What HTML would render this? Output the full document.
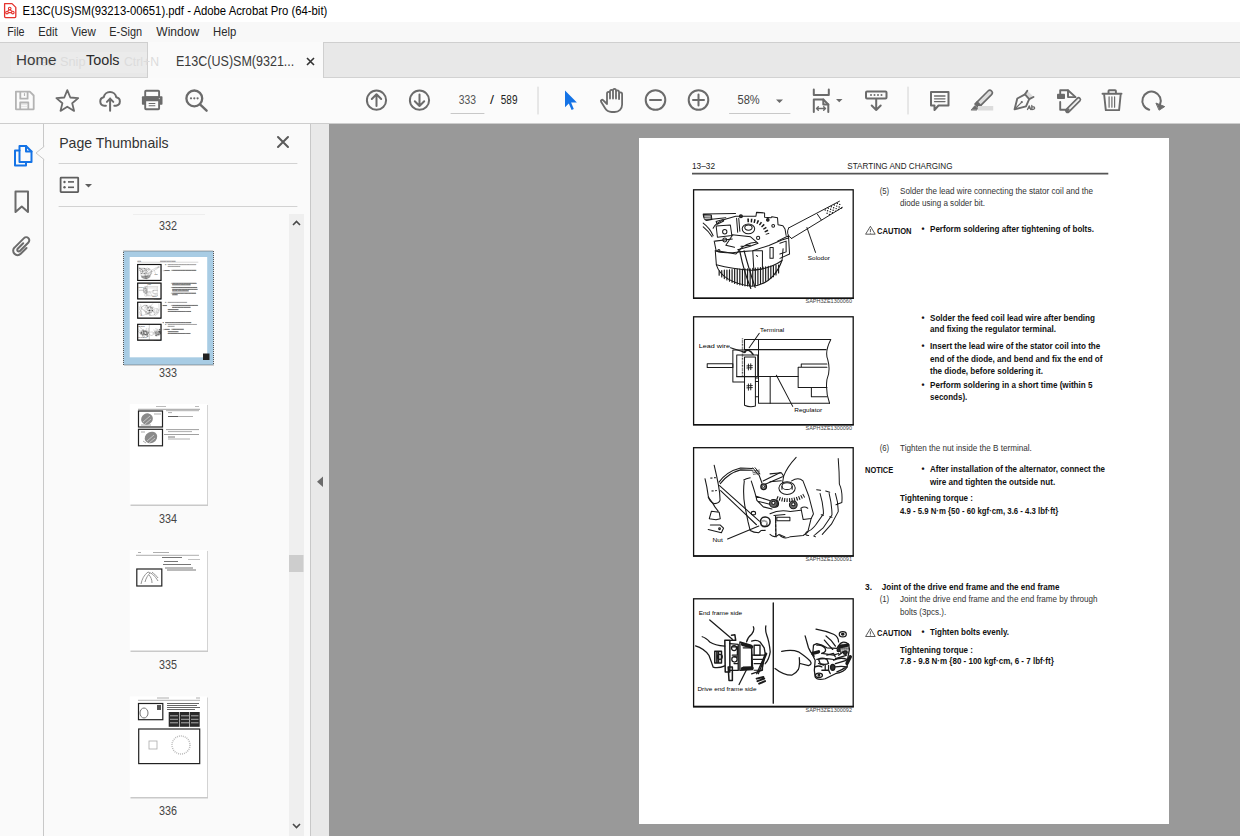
<!DOCTYPE html>
<html><head><meta charset="utf-8">
<style>
*{margin:0;padding:0;box-sizing:border-box}
html,body{width:1240px;height:836px;overflow:hidden;background:#999;font-family:"Liberation Sans",sans-serif;color:#222}
.abs{position:absolute}
#title{left:0;top:0;width:1240px;height:22px;background:#fff}
#title .t{left:22px;top:3px;font-size:13px;color:#000;white-space:nowrap}
#menu{left:0;top:22px;width:1240px;height:20px;background:#f8f8f8}
#menu span{position:absolute;top:2px;font-size:12.5px;color:#1a1a1a}
#tabs{left:0;top:42px;width:1240px;height:36px;background:#e8e8e8;border-top:1px solid #cfcfcf}
#tb{left:0;top:78px;width:1240px;height:46px;background:#fbfbfb;border-bottom:1px solid #cdcdcd}
#strip{left:0;top:124px;width:44px;height:712px;background:#fafafa;border-right:1px solid #c8c8c8}
#panel{left:44px;top:124px;width:267px;height:712px;background:#fafafa;border-right:1px solid #c8c8c8}
#coll{left:311px;top:124px;width:18px;height:712px;background:#e9e9e9}
#page{left:639px;top:138px;width:530px;height:686px;background:#fff}
svg{position:absolute;overflow:visible}
</style></head><body>
<div id="title" class="abs">
  <svg style="left:0;top:0" width="22" height="22" viewBox="0 0 22 22"><path d="M4.6 3.6h7.4l3.8 3.8v9.2c0 .6-.4 1-1 1H5.6c-.6 0-1-.4-1-1z" fill="#fff" stroke="#e5322d" stroke-width="1.3" stroke-linejoin="round"/><g fill="none" stroke="#e5322d" stroke-width="1.1"><circle cx="9.7" cy="8.6" r="1.3"/><circle cx="7" cy="12.6" r="1.3"/><circle cx="12.8" cy="12.6" r="1.3"/><path d="M9.2 9.8L7.5 11.4M10.2 9.8l1.9 1.6M8.3 12.6h3.2"/></g></svg>
</div>
<div id="menu" class="abs">
</div>
<div id="tabs" class="abs">
  <div class="abs" style="left:0;top:34px;width:1240px;height:1px;background:#d2d2d2"></div>
  <div class="abs" style="left:11px;top:9px;width:167px;height:21px;background:#ebebeb"></div>
  <div class="abs" style="left:147px;top:-1px;width:177px;height:37px;background:#fafafa;border-left:1px solid #cfcfcf;border-right:1px solid #cfcfcf"></div>
  <svg style="left:306px;top:14px" width="9" height="9" viewBox="0 0 9 9"><path d="M1 1l7 7M8 1l-7 7" stroke="#333" stroke-width="1.6"/></svg>
</div>
<div id="tb" class="abs"></div>
<svg style="left:0;top:0" width="1240" height="124" viewBox="0 0 1240 124">
<g fill="none" stroke="#6b6b6b" stroke-width="2" stroke-linejoin="round" stroke-linecap="round">
  <!-- save -->
  <g stroke="#b3b3b3" stroke-width="1.8"><path d="M15.9 91.6h13.9l3.9 3.9v13.4c0 .3-.2.5-.5.5H16.4c-.3 0-.5-.2-.5-.5z"/><path d="M20.3 91.8v6.9h7.3v-6.9"/><path d="M20.2 109v-6.5h8.1v6.5"/><path d="M24.5 93.7v1.8" stroke-width="1.2"/><path d="M21.5 104.6h5.5M21.5 106.6h5.5" stroke-width="0.8" stroke="#ddd"/></g>
  <!-- star -->
  <path d="M67.3 90.2l3 7.3 7.9.6-6 5.1 1.9 7.7-6.8-4.2-6.8 4.2 1.9-7.7-6-5.1 7.9-.6z" stroke-width="1.8"/>
  <!-- cloud -->
  <path d="M105.9 105.7h-1.6a4.3 4.3 0 0 1-.6-8.5 6.4 6.4 0 0 1 12.6 0 4.3 4.3 0 0 1-.2 8.5h-1.8" stroke-width="2"/><path d="M110.1 110.8v-12.3M106.9 101.9l3.2-3.3 3.2 3.3" stroke-width="2"/>
  <!-- print -->
  <rect x="145.2" y="90.8" width="13.9" height="6.5" rx="0.8" stroke-width="1.9"/>
  <path d="M142.9 96.2h18.6c.6 0 1 .4 1 1v6.6c0 .6-.4 1-1 1h-18.6c-.6 0-1-.4-1-1v-6.6c0-.6.4-1 1-1z" fill="#6b6b6b" stroke="none"/>
  <rect x="145.2" y="100.4" width="13.9" height="8.8" rx="0.8" fill="#fafafa" stroke-width="1.9"/><path d="M149.1 103.5h5.8M149.1 105.8h5.8" stroke-width="1.1"/>
  <circle cx="159.4" cy="98.6" r="0.7" fill="#ccc" stroke="none"/>
  <!-- search -->
  <circle cx="194.3" cy="98.4" r="7.9" stroke-width="2.3"/><path d="M200 104.3l6.6 6.4" stroke-width="2.4"/><g fill="#6b6b6b" stroke="none"><circle cx="191" cy="98.3" r="1.1"/><circle cx="194.3" cy="98.3" r="1.1"/><circle cx="197.6" cy="98.3" r="1.1"/></g>
  <!-- up/down -->
  <circle cx="376.5" cy="100.2" r="9.6"/><path d="M376.5 106v-11.5M371.8 99l4.7-4.7 4.7 4.7"/>
  <circle cx="419.5" cy="100.2" r="9.6"/><path d="M419.5 94.5v11.5M414.8 101.3l4.7 4.7 4.7-4.7"/>
  <!-- zoom -->
  <circle cx="655.5" cy="100" r="9.8"/><path d="M650 100h11"/>
  <circle cx="698.5" cy="100" r="9.8"/><path d="M693 100h11M698.5 94.5v11"/>
  <!-- hand -->
  <path d="M606.5 103.5l-3.2-3.2c-1.2-1.2-3-.1-2.2 1.5l4 6.5c1.5 2.5 3.5 3.7 6.5 3.7h3c4.5 0 7.5-3.2 7.5-7.5v-10.5c0-2.2-3-2.2-3 0v5M616 98.5v-8c0-2.2-3-2.2-3 0v8M613 98v-6.5c0-2.2-3-2.2-3 0v7M610 98.5v-5c0-2.2-3-2.2-3 0v10.5M619 99v-7c0-2.2-3-2.2-3 0v6.5" stroke-width="1.8"/>
  <!-- fit page -->
  <path d="M813.8 89.5v5.5h15v-5.5"/><path d="M813.8 112v-12.5h9.5l5 5v7.5"/><path d="M823.3 99.5v5h5"/><path d="M816.5 108.5h9M818.3 106.7l-1.8 1.8 1.8 1.8M823.7 106.7l1.8 1.8-1.8 1.8" stroke-width="1.4"/>
  <!-- scroll -->
  <rect x="866" y="91.5" width="20.5" height="7" rx="1"/><g fill="#6b6b6b" stroke="none"><circle cx="871" cy="95" r="1"/><circle cx="874.5" cy="95" r="1"/><circle cx="878" cy="95" r="1"/><circle cx="881.5" cy="95" r="1"/></g><path d="M876.2 99v11M871.7 105.5l4.5 4.5 4.5-4.5"/>
  <!-- comment -->
  <path d="M931 92h17.5v13.5h-10l-4 4.5v-4.5h-3.5z"/><path d="M934.5 96h10.5M934.5 98.8h10.5M934.5 101.6h10.5" stroke-width="1.3"/>
  <!-- highlight -->
  <path d="M989.8 92.8L978.8 103.8" stroke-width="6.6" stroke-linecap="round"/><path d="M989.8 92.8L979.2 103.4" stroke="#dcdcdc" stroke-width="3.4" stroke-linecap="round"/>
  <path d="M979.5 103.1L976.3 106.3" stroke-width="6.6" stroke-linecap="butt"/>
  <path d="M971.3 109.8L974.9 105.6 977.5 108.2 976.9 109.8z" fill="#6b6b6b" stroke-width="0.8"/>
  <rect x="978" y="106" width="15.2" height="4.5" fill="#dcdcdc" stroke="none"/>
  <!-- sign -->
  <path d="M1025 94.3L1027.3 90.5 1033.7 96.9 1029.2 99.2z" fill="#dcdcdc" stroke="none"/>
  <path d="M1025 94.3L1027.3 90.8M1029.2 99.2L1033.5 97" stroke-width="1.9"/>
  <path d="M1025 94.3L1017.3 98.5 1014.6 109.3 1026 106.3 1029.2 99.2z" stroke-width="1.9"/>
  <path d="M1014.9 109L1021.8 102.1" stroke-width="1.2"/><circle cx="1021.8" cy="102.1" r="1.1" fill="#6b6b6b" stroke="none"/>
  <path d="M1027.5 109.5l1.8-3.6 1.4 3.6M1028.2 108.2h1.8M1031.8 105.3v4.2c1.2 0 2.8-.2 2.8-1.5s-1.6-1.3-2.8-1" stroke-width="1.3"/>
  <!-- send/fill -->
  <rect x="1057" y="93.8" width="8" height="5.2" rx="0.8" fill="#6b6b6b" stroke="none"/>
  <path d="M1060.2 93.8V90.3H1068L1075.6 97.1" stroke-width="1.9"/><path d="M1068 90.5V97.1H1075" stroke-width="1.9"/><path d="M1060.2 102V109.7H1065.5" stroke-width="1.9"/>
  <path d="M1067.6 110.6L1078.6 99.6" stroke-width="5.2" stroke-linecap="round"/><path d="M1068.6 109.6L1078.6 99.6" stroke="#f0f0f0" stroke-width="2" stroke-linecap="round"/><path d="M1066.7 111.3L1068.6 109.4" stroke-width="2"/>
  <!-- delete -->
  <path d="M1102.5 93.8h19M1108.5 93.5v-2.4c0-.5.3-.8.8-.8h5.8c.5 0 .8.3.8.8v2.4" stroke-width="1.9"/><path d="M1104.2 95l1.6 15.1h13.3l1.5-15.1" stroke-width="1.9"/><path d="M1109.1 96.8v10.4M1111.9 96.8v10.4M1114.6 96.8v10.4" stroke-width="1.2"/>
  <!-- rotate -->
  <path d="M1149.2 109.7A9.2 9.2 0 1 1 1160 104.5" stroke-width="2"/><path d="M1156.3 103.2L1164.7 106.6 1159.4 110z" fill="#6b6b6b" stroke-width="1"/>
  <!-- dropdown triangles -->
  <path d="M776 99.5h7l-3.5 3.5z M836 99h6.5l-3.25 3.2z" fill="#6b6b6b" stroke="none"/>
  <path d="M538 87v27M908 87v27" stroke="#d9d9d9" stroke-width="1.2"/>
  <path d="M451 113.5h33M729.5 113.5h60.5" stroke="#c8c8c8" stroke-width="1"/>
</g>
<path d="M565 90.5v16.7l3.8-3.8 2.8 6.5 2.2-1-2.7-6.3h5.8z" fill="#1473e6"/>
</svg>
<div id="strip" class="abs"></div>
<div id="panel" class="abs"></div>
<div id="coll" class="abs"></div>
<svg style="left:0;top:0" width="330" height="836" viewBox="0 0 330 836">
 <g fill="none" stroke-width="2" stroke-linejoin="round" stroke-linecap="round">
  <path d="M44 146.5l-8 6.5 8 6.5" fill="#fafafa" stroke="#c8c8c8" stroke-width="1"/>
  <g stroke="#1473e6"><path d="M19.5 150.5h-4.5v15h11v-3"/><path d="M19.5 146h6.5l5.5 5.5v10.5h-12z"/><path d="M26 146v5.5h5.5"/></g>
  <path d="M15.5 191.5h12.5v20.5l-6.25-5.5-6.25 5.5z" stroke="#6b6b6b"/>
  <path d="M22.5 244l-5.8 5.8c-1.8 1.8-4.5 1.8-6.2 0s-1.8-4.5 0-6.2l9.5-9.5c1.2-1.2 3.2-1.2 4.4 0s1.2 3.2 0 4.4l-8.5 8.5c-.6.6-1.6.6-2.2 0s-.6-1.6 0-2.2l5.5-5.5" stroke="#6b6b6b" transform="translate(4,4)"/>
  <!-- panel header -->
  <path d="M278 137l10 10M288 137l-10 10" stroke="#5a5a5a"/>
  <path d="M59 163.5h238M59 206.5h238" stroke="#d2d2d2" stroke-width="1"/>
  <rect x="60.6" y="177.7" width="17.6" height="14.4" rx="0.5" stroke="#5e5e5e" stroke-width="1.8"/>
  <g fill="#5e5e5e" stroke="none"><circle cx="64.5" cy="182" r="1.2"/><circle cx="64.5" cy="187.3" r="1.2"/><rect x="68" y="181.1" width="6" height="1.6"/><rect x="68" y="186.5" width="6" height="1.6"/></g>
  <path d="M85 184h7l-3.5 3.5z" fill="#5e5e5e" stroke="none"/>
 </g>
</svg>
<!--PAGE-->
<svg style="left:0;top:0" width="1240" height="836" viewBox="0 0 1240 836" font-family="Liberation Sans, sans-serif">
<defs><g id="pg"><rect x="639" y="138" width="530" height="686" fill="#fff"/>
<text x="692" y="169.3" textLength="23" lengthAdjust="spacingAndGlyphs" font-size="9.2" fill="#222">13–32</text>
<text x="847.3" y="169.3" textLength="105.2" lengthAdjust="spacingAndGlyphs" font-size="9.2" fill="#222">STARTING AND CHARGING</text>
<path d="M692 173.6H1108.3" stroke="#555" stroke-width="1.6"/>
<text x="879.7" y="193.6" textLength="9.5" lengthAdjust="spacingAndGlyphs" font-size="9.6" fill="#333">(5)</text>
<text x="900" y="193.6" textLength="193" lengthAdjust="spacingAndGlyphs" font-size="9.6" fill="#333">Solder the lead wire connecting the stator coil and the</text>
<text x="900" y="206.2" textLength="85" lengthAdjust="spacingAndGlyphs" font-size="9.6" fill="#333">diode using a solder bit.</text>
<path d="M870.4 226.3L865.6 234.2H875.2Z" fill="none" stroke="#333" stroke-width="0.8"/><path d="M870.4 229v3.2M870.4 233v.6" stroke="#333" stroke-width="0.8"/>
<text x="877" y="233.5" textLength="34.5" lengthAdjust="spacingAndGlyphs" font-size="9.2" font-weight="700" fill="#111">CAUTION</text>
<text x="921.5" y="231.8" textLength="3" lengthAdjust="spacingAndGlyphs" font-size="9" font-weight="700" fill="#111">•</text>
<text x="930" y="231.8" textLength="164" lengthAdjust="spacingAndGlyphs" font-size="9.6" font-weight="700" fill="#111">Perform soldering after tightening of bolts.</text>
<text x="921.5" y="320.5" textLength="3" lengthAdjust="spacingAndGlyphs" font-size="9" font-weight="700" fill="#111">•</text>
<text x="930" y="320.5" textLength="165" lengthAdjust="spacingAndGlyphs" font-size="9.6" font-weight="700" fill="#111">Solder the feed coil lead wire after bending</text>
<text x="930" y="332" textLength="126" lengthAdjust="spacingAndGlyphs" font-size="9.6" font-weight="700" fill="#111">and fixing the regulator terminal.</text>
<text x="921.5" y="349.4" textLength="3" lengthAdjust="spacingAndGlyphs" font-size="9" font-weight="700" fill="#111">•</text>
<text x="930" y="349.4" textLength="170.3" lengthAdjust="spacingAndGlyphs" font-size="9.6" font-weight="700" fill="#111">Insert the lead wire of the stator coil into the</text>
<text x="930" y="361.9" textLength="172.5" lengthAdjust="spacingAndGlyphs" font-size="9.6" font-weight="700" fill="#111">end of the diode, and bend and fix the end of</text>
<text x="930" y="373.7" textLength="113" lengthAdjust="spacingAndGlyphs" font-size="9.6" font-weight="700" fill="#111">the diode, before soldering it.</text>
<text x="921.5" y="388" textLength="3" lengthAdjust="spacingAndGlyphs" font-size="9" font-weight="700" fill="#111">•</text>
<text x="930" y="388" textLength="162.5" lengthAdjust="spacingAndGlyphs" font-size="9.6" font-weight="700" fill="#111">Perform soldering in a short time (within 5</text>
<text x="930" y="399.7" textLength="37.3" lengthAdjust="spacingAndGlyphs" font-size="9.6" font-weight="700" fill="#111">seconds).</text>
<text x="879.7" y="451.1" textLength="9.5" lengthAdjust="spacingAndGlyphs" font-size="9.6" fill="#333">(6)</text>
<text x="900" y="451.1" textLength="131.8" lengthAdjust="spacingAndGlyphs" font-size="9.6" fill="#333">Tighten the nut inside the B terminal.</text>
<text x="865" y="473.2" textLength="28.2" lengthAdjust="spacingAndGlyphs" font-size="9.2" font-weight="700" fill="#111">NOTICE</text>
<text x="921.5" y="472.1" textLength="3" lengthAdjust="spacingAndGlyphs" font-size="9" font-weight="700" fill="#111">•</text>
<text x="930" y="472.1" textLength="175" lengthAdjust="spacingAndGlyphs" font-size="9.6" font-weight="700" fill="#111">After installation of the alternator, connect the</text>
<text x="930" y="484.7" textLength="125.2" lengthAdjust="spacingAndGlyphs" font-size="9.6" font-weight="700" fill="#111">wire and tighten the outside nut.</text>
<text x="900" y="501" textLength="73" lengthAdjust="spacingAndGlyphs" font-size="9.6" font-weight="700" fill="#111">Tightening torque :</text>
<text x="900" y="513.6" textLength="158.4" lengthAdjust="spacingAndGlyphs" font-size="9.6" font-weight="700" fill="#111">4.9 - 5.9 N·m {50 - 60 kgf·cm, 3.6 - 4.3 lbf·ft}</text>
<text x="865" y="590.3" textLength="7" lengthAdjust="spacingAndGlyphs" font-size="9.6" font-weight="700" fill="#111">3.</text>
<text x="881.8" y="590.3" textLength="177.6" lengthAdjust="spacingAndGlyphs" font-size="9.6" font-weight="700" fill="#111">Joint of the drive end frame and the end frame</text>
<text x="879.7" y="602.3" textLength="9.5" lengthAdjust="spacingAndGlyphs" font-size="9.6" fill="#333">(1)</text>
<text x="900" y="602.3" textLength="197.6" lengthAdjust="spacingAndGlyphs" font-size="9.6" fill="#333">Joint the drive end frame and the end frame by through</text>
<text x="900" y="614.8" textLength="46.2" lengthAdjust="spacingAndGlyphs" font-size="9.6" fill="#333">bolts (3pcs.).</text>
<path d="M870.4 628.6L865.6 636.5H875.2Z" fill="none" stroke="#333" stroke-width="0.8"/><path d="M870.4 631.3v3.2M870.4 635.3v.6" stroke="#333" stroke-width="0.8"/>
<text x="877" y="635.8" textLength="34.5" lengthAdjust="spacingAndGlyphs" font-size="9.2" font-weight="700" fill="#111">CAUTION</text>
<text x="921.5" y="634.8" textLength="3" lengthAdjust="spacingAndGlyphs" font-size="9" font-weight="700" fill="#111">•</text>
<text x="930" y="634.8" textLength="79" lengthAdjust="spacingAndGlyphs" font-size="9.6" font-weight="700" fill="#111">Tighten bolts evenly.</text>
<text x="900" y="652.6" textLength="73" lengthAdjust="spacingAndGlyphs" font-size="9.6" font-weight="700" fill="#111">Tightening torque :</text>
<text x="900" y="664.1" textLength="153.8" lengthAdjust="spacingAndGlyphs" font-size="9.6" font-weight="700" fill="#111">7.8 - 9.8 N·m {80 - 100 kgf·cm, 6 - 7 lbf·ft}</text>
<rect x="693.6" y="189.8" width="159.6" height="108.5" fill="none" stroke="#111" stroke-width="1.3"/>
<path d="M693 298.3H853.8" stroke="#111" stroke-width="1.6"/>
<text x="805.5" y="303.3" textLength="46.5" lengthAdjust="spacingAndGlyphs" font-size="5" fill="#444">SAPH3ZE1300060</text>
<rect x="693.6" y="316.8" width="159.6" height="107.89999999999998" fill="none" stroke="#111" stroke-width="1.3"/>
<path d="M693 424.7H853.8" stroke="#111" stroke-width="1.6"/>
<text x="805.5" y="429.7" textLength="46.5" lengthAdjust="spacingAndGlyphs" font-size="5" fill="#444">SAPH3ZE1300090</text>
<rect x="693.6" y="447.7" width="159.6" height="108.30000000000001" fill="none" stroke="#111" stroke-width="1.3"/>
<path d="M693 556H853.8" stroke="#111" stroke-width="1.6"/>
<text x="805.5" y="561" textLength="46.5" lengthAdjust="spacingAndGlyphs" font-size="5" fill="#444">SAPH3ZE1300091</text>
<rect x="693.6" y="598.8" width="159.6" height="107.80000000000007" fill="none" stroke="#111" stroke-width="1.3"/>
<path d="M693 706.6H853.8" stroke="#111" stroke-width="1.6"/>
<text x="805.5" y="711.6" textLength="46.5" lengthAdjust="spacingAndGlyphs" font-size="5" fill="#444">SAPH3ZE1300092</text>
<g transform="translate(700,200) scale(0.10764262648008613)" fill="none" stroke="#1a1a1a" stroke-width="9.5" stroke-linecap="round" stroke-linejoin="round">
<path d="M30,135 Q35,185 60,190 L110,180 L105,140 Z" fill="#555"/><path d="M45,150 L95,150 M45,170 L95,168" stroke="#fff" stroke-width="8"/>
<path d="M30,130 L330,125 M110,178 L240,165"/>
<path d="M30,215 Q92,262 122,332 M30,250 Q82,292 112,342"/>
<path d="M122,262 Q152,202 242,176 L332,150 L520,150 L525,115 L600,120 L600,160 L660,165 L668,155 L720,165 L725,230 L770,240 L790,270 L800,330"/>
<path d="M150,200 L215,180 L220,195 L160,225 Z"/>
<circle cx="380" cy="150" r="14" fill="#333"/><circle cx="630" cy="185" r="12" fill="#333"/><circle cx="680" cy="240" r="13"/><circle cx="230" cy="295" r="20"/><circle cx="230" cy="372" r="18"/><circle cx="540" cy="352" r="15"/><circle cx="175" cy="470" r="10"/>
<ellipse cx="450" cy="268" rx="58" ry="46"/><ellipse cx="450" cy="256" rx="34" ry="24"/>
<path d="M440,190 Q585,182 628,318" stroke-width="34" stroke-dasharray="14 16" stroke-linecap="butt"/>
<path d="M150,242 L282,232 L296,330 L162,346 Z M140,382 L300,362 M340,170 L350,300 M360,170 L370,290"/>
<path d="M300,322 L470,342 L540,402 L460,432 L350,462 M300,330 L240,420 L320,440"/>
<path d="M132,382 L150,472 L232,482 L332,502 L362,472"/>
<path d="M142,472 Q200,502 362,482 L490,472 L640,422 L760,372 L822,352"/>
<path d="M720,382 L822,332 L832,502 L742,542 M742,402 L800,382 L800,482 L742,502"/>
<path d="M142,472 L152,602 Q300,642 482,652 Q650,642 762,562"/>
<path d="M152,602 Q202,762 482,802 Q682,782 762,562 L772,452"/>
<path d="M178,658 L178,699 M202,655 L202,715 M226,652 L226,730 M250,650 L250,743 M274,648 L274,755 M298,646 L298,765 M322,644 L322,775 M346,643 L346,782 M370,642 L370,788 M394,641 L394,793 M418,640 L418,797 M442,640 L442,799 M466,639 L466,799 M490,636 L490,795 M514,633 L514,790 M538,630 L538,783 M562,627 L562,775 M586,623 L586,765 M610,620 L610,754 M634,617 L634,742 M658,614 L658,728 M682,611 L682,713 M706,607 L706,696 M730,604 L730,678 " stroke-width="11"/>
<path d="M490,472 L580,472 L580,642 L500,652 Z M525,515 L535,525"/>
<path d="M650,442 L680,442 L680,542 L650,542 Z"/>
<path d="M370,472 C392,602 432,722 472,822 M410,472 C442,602 482,722 512,812" stroke-width="11"/>
<path d="M360,470 Q420,400 522,392 M380,430 L470,420"/>
</g>
<g transform="translate(693,189) scale(0.13157894736842105)" fill="none" stroke="#1a1a1a" stroke-width="7.5" stroke-linecap="round" stroke-linejoin="round">
<path d="M727,296 L1113,93 M749,376 L1135,140 M727,296 Q700,345 749,376 M945,191 L975,235"/>
<circle cx="1005" cy="159" r="5.5" fill="#111" stroke="none"/><circle cx="1023" cy="166" r="5.5" fill="#111" stroke="none"/><circle cx="1019" cy="185" r="5.5" fill="#111" stroke="none"/><circle cx="1037" cy="193" r="5.5" fill="#111" stroke="none"/><circle cx="1028" cy="147" r="5.5" fill="#111" stroke="none"/><circle cx="1046" cy="154" r="5.5" fill="#111" stroke="none"/><circle cx="1042" cy="173" r="5.5" fill="#111" stroke="none"/><circle cx="1060" cy="180" r="5.5" fill="#111" stroke="none"/><circle cx="1051" cy="135" r="5.5" fill="#111" stroke="none"/><circle cx="1069" cy="142" r="5.5" fill="#111" stroke="none"/><circle cx="1065" cy="161" r="5.5" fill="#111" stroke="none"/><circle cx="1083" cy="168" r="5.5" fill="#111" stroke="none"/><circle cx="1074" cy="122" r="5.5" fill="#111" stroke="none"/><circle cx="1092" cy="130" r="5.5" fill="#111" stroke="none"/><circle cx="1088" cy="149" r="5.5" fill="#111" stroke="none"/><circle cx="1106" cy="156" r="5.5" fill="#111" stroke="none"/><circle cx="1097" cy="110" r="5.5" fill="#111" stroke="none"/><circle cx="1115" cy="117" r="5.5" fill="#111" stroke="none"/><circle cx="1111" cy="137" r="5.5" fill="#111" stroke="none"/><circle cx="1129" cy="144" r="5.5" fill="#111" stroke="none"/>
<path d="M866,293 L931,482"/>
<text x="873" y="540" textLength="167" lengthAdjust="spacingAndGlyphs" font-size="40" fill="#000" stroke="none">Solodor</text>
</g>
<g transform="translate(680,305) scale(0.15547263681592038)" fill="none" stroke="#1a1a1a" stroke-width="6.5" stroke-linecap="round" stroke-linejoin="round">
<path d="M175,378 L340,378 L340,402 L175,402 Z"/>
<path d="M415,222 L970,222 Q930,300 950,350 Q970,420 945,480 Q935,560 962,632"/>
<path d="M415,287 L940,287 M505,222 L505,632 L962,632 M365,460 L760,460"/>
<path d="M760,400 L945,400 M760,400 L760,530 L945,530 M780,400 L780,380 L945,380 M845,530 L845,590 L945,590 M580,460 L580,632"/>
<path d="M415,222 L415,290 M340,290 L340,495 L415,495 M340,290 L415,290"/>
<path d="M365,322 L500,322 L500,462 L365,462 Z"/>
<path d="M415,335 L485,335 L485,650 Q450,662 415,645 Z"/>
<path d="M402,215 L402,460" stroke-width="9" stroke-dasharray="4 5" stroke-linecap="butt"/>
<path d="M440,380 L440,418 M455,378 L455,416 M430,392 L465,390 M430,405 L465,403 M440,508 L440,548 M455,506 L455,546 M430,520 L465,518 M430,533 L465,531" stroke-width="6"/>
<path d="M485,470 L505,470 M485,492 L505,492 M485,590 L505,590"/>
<path d="M412,305 Q440,272 470,318" stroke-width="10"/>
<path d="M510,182 L445,275 M325,275 L420,305 M725,652 L620,452"/>
<text x="515" y="175" textLength="155" lengthAdjust="spacingAndGlyphs" font-size="40" fill="#000" stroke="none">Terminal</text><text x="120" y="275" textLength="202" lengthAdjust="spacingAndGlyphs" font-size="40" fill="#000" stroke="none">Lead wire</text><text x="735" y="690" textLength="180" lengthAdjust="spacingAndGlyphs" font-size="40" fill="#000" stroke="none">Regulator</text>
</g>
<g transform="translate(705,455) scale(0.10764262648008613)" fill="none" stroke="#1a1a1a" stroke-width="10" stroke-linecap="round" stroke-linejoin="round">
<path d="M85,95 Q110,200 125,280 Q140,360 140,420 Q130,452 90,452 Q40,440 30,380 Q20,300 0,220"/>
<path d="M50,215 L100,210 M60,335 L110,330" stroke-dasharray="20 14" stroke-linecap="butt"/>
<path d="M30,392 Q70,442 92,482 L122,522 M60,522 L132,532 L142,592 L102,602 L40,592 Z M50,650 L140,650 L172,680 L152,722 L30,692"/>
<circle cx="135" cy="685" r="8"/>
<path d="M130,252 Q200,152 330,120 L440,125 M142,266 Q215,168 330,138 L440,142" stroke-width="10"/>
<path d="M445,120 L495,185 M465,118 L510,175" stroke-width="9"/><path d="M440,150 L505,140 M445,165 L505,155 M450,180 L505,170" stroke-width="6"/>
<path d="M135,285 L505,615 M145,330 L478,648" stroke-width="10"/>
<circle cx="560" cy="620" r="45" stroke-width="14"/><circle cx="548" cy="638" r="28" stroke-width="16" stroke-dasharray="4 5" stroke-linecap="butt"/>
<path d="M210,780 L500,660"/>
<text x="70" y="805" textLength="95" lengthAdjust="spacingAndGlyphs" font-size="52" fill="#000" stroke="none">Nut</text>
<path d="M360,232 Q380,222 420,212 M365,242 Q350,352 370,472 Q380,522 400,622 L420,702 Q450,722 500,722 L520,702 L560,700"/>
<path d="M430,242 Q470,362 482,422 L542,482 L622,502 M470,382 L600,422 M500,432 L620,462 M500,180 L530,262 M540,242 L700,162 M560,272 L720,202"/>
<ellipse cx="450" cy="540" rx="20" ry="16"/>
<circle cx="545" cy="295" r="26" stroke-width="12" fill="#888"/><circle cx="545" cy="292" r="10" fill="#fff" stroke-width="6"/><circle cx="650" cy="452" r="32" stroke-width="12" fill="#888"/><circle cx="650" cy="448" r="12" fill="#fff" stroke-width="6"/>
<path d="M640,562 L743,552 M655,572 L660,762 M700,742 L743,762" />
</g>
<g transform="translate(770,450) scale(0.1137009664582149)" fill="none" stroke="#1a1a1a" stroke-width="9" stroke-linecap="round" stroke-linejoin="round">
<path d="M230,65 Q150,150 120,230 L110,290"/>
<ellipse cx="150" cy="335" rx="72" ry="56"/><ellipse cx="150" cy="318" rx="45" ry="30"/><path d="M105,318 L105,345 M195,318 L195,345"/>
<path d="M60,420 Q180,470 300,400" stroke-width="34" stroke-dasharray="10 12" stroke-linecap="butt"/>
<circle cx="30" cy="470" r="34" fill="#666"/><circle cx="30" cy="465" r="14" fill="#fff"/><circle cx="205" cy="482" r="34" fill="#666"/><circle cx="205" cy="477" r="14" fill="#fff"/>
<path d="M0,210 L100,200 L120,230 M0,280 L100,270"/>
<path d="M190,272 Q250,232 290,272 L340,402 L382,562 L362,602 L292,612 L272,512 Q302,492 332,512"/>
<path d="M0,742 Q40,782 80,742 Q120,792 180,762 L292,752 L332,722 L362,602"/>
<path d="M50,580 L50,760" stroke-dasharray="25 12" stroke-linecap="butt"/>
<path d="M60,592 L175,592 L175,622 L60,622 Z M0,560 Q80,520 180,540 L270,530"/>
<path d="M600,75 Q610,200 610,300 Q640,360 632,462 L580,482 M440,382 Q470,482 470,562 L400,662 Q360,712 320,722 Q300,752 340,752 M520,382 Q545,482 545,572 L470,682 L400,742 Q370,762 400,762 M575,382 Q600,462 600,542 L540,652 L460,742"/>
<path d="M410,350 L445,355 M490,360 L525,372 M450,570 L470,575 M525,588 L545,592"/>
</g>
<g transform="translate(680,585) scale(0.15547263681592038)" fill="none" stroke="#1a1a1a" stroke-width="6.5" stroke-linecap="round" stroke-linejoin="round">
<path d="M600,115 L600,760" stroke-width="9"/>
<text x="120" y="190" textLength="280" lengthAdjust="spacingAndGlyphs" font-size="40" fill="#000" stroke="none">End frame side</text><text x="112" y="685" textLength="380" lengthAdjust="spacingAndGlyphs" font-size="40" fill="#000" stroke="none">Drive end frame side</text>
</g>
<g transform="translate(693,620) scale(0.08375209380234507)" fill="none" stroke="#1a1a1a" stroke-width="15" stroke-linecap="round" stroke-linejoin="round">
<path d="M200,0 L470,230"/>
<path d="M110,200 Q150,210 200,262 Q260,302 380,312 M30,310 Q130,340 190,422 Q220,502 240,562 Q300,582 380,547"/>
<path d="M260,372 L340,372 L340,512 L260,512 Z M285,380 L285,505 M305,380 L305,505" stroke-width="18"/>
<path d="M380,242 L440,242 L440,622 L385,622 Z M460,182 L500,177 L510,242 L455,242 M420,562 L470,562 L470,722 L430,722 Z" stroke-width="18"/>
<path d="M440,282 L540,292 L540,602 L440,602 M470,320 L530,320 L530,420 L470,420 M490,440 L540,440 L540,520 L490,520" stroke-width="16"/>
<path d="M560,262 L700,302 L712,592 L560,602 Z M600,332 L700,332 L700,562 L600,562" stroke-width="16"/>
<path d="M590,290 L700,320 M590,580 L705,575" stroke-width="40"/>
<path d="M700,252 Q760,232 800,262 L850,332 L862,402 L842,502 L822,602 L700,642 M730,302 L800,302 L800,422 L730,422 Z M720,470 L830,470" stroke-width="16"/>
<path d="M720,80 Q740,120 700,170 Q650,210 640,262 M870,70 Q860,120 880,180 Q910,260 922,380 Q912,462 862,522"/>
<path d="M760,642 L870,392 M780,642 L880,402"/>
<path d="M760,700 L840,680 M770,730 L850,700 M790,760 L860,730" stroke-width="24"/>
<path d="M550,770 L640,592"/>
<circle cx="490" cy="335" r="30"/><circle cx="495" cy="470" r="32"/><circle cx="320" cy="440" r="30"/>
<path d="M705,420 L860,420 M730,520 L830,520 L830,600 L730,600" stroke-width="14"/>
</g>
<g transform="translate(775,620) scale(0.08368200836820085)" fill="none" stroke="#1a1a1a" stroke-width="15" stroke-linecap="round" stroke-linejoin="round">
<path d="M80,375 Q200,350 280,380 Q370,440 420,490 Q450,530 400,545 L300,520 M0,580 Q100,660 200,660 Q250,640 280,590 Q300,540 290,450"/>
<path d="M360,190 Q380,262 400,332 Q430,402 470,432 M490,110 Q600,130 700,170 Q760,200 760,262 M610,190 Q680,240 722,312 M590,240 Q640,300 690,352"/>
<path d="M460,300 L500,282 Q560,292 620,332 L740,340 Q800,220 880,290 L890,352 L870,452 L862,562 Q830,622 722,642 L600,702 Q500,722 480,682 L470,602 L480,482 L450,422 Z"/>
<path d="M450,400 L520,380" stroke-width="40"/>
<path d="M770,300 L880,300 M770,340 L880,340 M780,380 L880,380" stroke-width="30" stroke-dasharray="14 10" stroke-linecap="butt"/>
<ellipse cx="690" cy="565" rx="26" ry="36" fill="#333"/>
<ellipse cx="810" cy="170" rx="42" ry="32"/><ellipse cx="810" cy="170" rx="14" ry="10" fill="#333"/>
<ellipse cx="525" cy="660" rx="42" ry="26"/><circle cx="525" cy="660" r="10"/>
<path d="M500,470 Q600,450 700,472 M722,462 L852,422 M722,522 Q780,502 852,482 M600,542 L600,602 M640,542 L640,602 M560,400 L700,420 L760,400 M520,520 L580,540"/>
<path d="M500,300 Q560,290 600,340 Q620,380 560,400 M520,470 Q560,440 620,470 L640,520 Q600,540 540,520 Z M700,480 Q780,440 860,470 M720,560 Q790,550 860,560 M620,420 L700,400 L720,440 M760,420 L820,380 M560,600 L640,600 L660,640 M480,560 Q520,540 560,560 M740,620 Q800,600 850,560" stroke-width="16"/>
<path d="M770,320 L870,300" stroke-width="40"/><circle cx="840" cy="390" r="22" fill="#333"/><circle cx="760" cy="360" r="18" fill="#333"/><path d="M900,440 L860,520" stroke-width="40"/>
</g>
</g></defs>
<use href="#pg"/>
</svg>
<!--/PAGE-->
<!--PANEL-->
<svg style="left:0;top:0" width="330" height="836" viewBox="0 0 330 836" font-family="Liberation Sans, sans-serif">
<rect x="289" y="214" width="15" height="622" fill="#efefef"/>
<rect x="289" y="555" width="14.5" height="17" fill="#cdcdcd"/>
<path d="M293 225l3.5-3.5 3.5 3.5M293 824l3.5 3.5 3.5-3.5" fill="none" stroke="#4a4a4a" stroke-width="1.6"/>
<path d="M133 214.5h72" stroke="#eeeeee" stroke-width="1"/>
<text x="168" y="230.3" text-anchor="middle" font-size="12" fill="#444" textLength="18" lengthAdjust="spacingAndGlyphs">332</text>
<text x="168" y="376.6" text-anchor="middle" font-size="12" fill="#444" textLength="18" lengthAdjust="spacingAndGlyphs">333</text>
<text x="168" y="522.6" text-anchor="middle" font-size="12" fill="#444" textLength="18" lengthAdjust="spacingAndGlyphs">334</text>
<text x="168" y="669" text-anchor="middle" font-size="12" fill="#444" textLength="18" lengthAdjust="spacingAndGlyphs">335</text>
<text x="168" y="815" text-anchor="middle" font-size="12" fill="#444" textLength="18" lengthAdjust="spacingAndGlyphs">336</text>
<rect x="123.5" y="251" width="90" height="114" fill="#a8cce4" stroke="#555" stroke-width="1" stroke-dasharray="1 1"/>
<g transform="translate(129.7,257) scale(0.14623) translate(-639,-138)"><use href="#pg"/><path d="M692 166.3h23" stroke="#999" stroke-width="5"/>
<path d="M847.3 166.3h105.2" stroke="#999" stroke-width="5"/>
<path d="M879.7 190.6h9.5" stroke="#999" stroke-width="5"/>
<path d="M900 190.6h193" stroke="#999" stroke-width="5"/>
<path d="M900 203.2h85" stroke="#999" stroke-width="5"/>
<path d="M877 230.5h34.5" stroke="#666" stroke-width="5.5"/>
<path d="M921.5 228.8h3" stroke="#666" stroke-width="5.5"/>
<path d="M930 228.8h164" stroke="#666" stroke-width="5.5"/>
<path d="M921.5 317.5h3" stroke="#666" stroke-width="5.5"/>
<path d="M930 317.5h165" stroke="#666" stroke-width="5.5"/>
<path d="M930 329h126" stroke="#666" stroke-width="5.5"/>
<path d="M921.5 346.4h3" stroke="#666" stroke-width="5.5"/>
<path d="M930 346.4h170.3" stroke="#666" stroke-width="5.5"/>
<path d="M930 358.9h172.5" stroke="#666" stroke-width="5.5"/>
<path d="M930 370.7h113" stroke="#666" stroke-width="5.5"/>
<path d="M921.5 385h3" stroke="#666" stroke-width="5.5"/>
<path d="M930 385h162.5" stroke="#666" stroke-width="5.5"/>
<path d="M930 396.7h37.3" stroke="#666" stroke-width="5.5"/>
<path d="M879.7 448.1h9.5" stroke="#999" stroke-width="5"/>
<path d="M900 448.1h131.8" stroke="#999" stroke-width="5"/>
<path d="M865 470.2h28.2" stroke="#666" stroke-width="5.5"/>
<path d="M921.5 469.1h3" stroke="#666" stroke-width="5.5"/>
<path d="M930 469.1h175" stroke="#666" stroke-width="5.5"/>
<path d="M930 481.7h125.2" stroke="#666" stroke-width="5.5"/>
<path d="M900 498h73" stroke="#666" stroke-width="5.5"/>
<path d="M900 510.6h158.4" stroke="#666" stroke-width="5.5"/>
<path d="M865 587.3h7" stroke="#666" stroke-width="5.5"/>
<path d="M881.8 587.3h177.6" stroke="#666" stroke-width="5.5"/>
<path d="M879.7 599.3h9.5" stroke="#999" stroke-width="5"/>
<path d="M900 599.3h197.6" stroke="#999" stroke-width="5"/>
<path d="M900 611.8h46.2" stroke="#999" stroke-width="5"/>
<path d="M877 632.8h34.5" stroke="#666" stroke-width="5.5"/>
<path d="M921.5 631.8h3" stroke="#666" stroke-width="5.5"/>
<path d="M930 631.8h79" stroke="#666" stroke-width="5.5"/>
<path d="M900 649.6h73" stroke="#666" stroke-width="5.5"/>
<path d="M900 661.1h153.8" stroke="#666" stroke-width="5.5"/>
<rect x="693.6" y="189.3" width="159.6" height="109.0" fill="none" stroke="#111" stroke-width="8"/>
<rect x="693.6" y="316.3" width="159.6" height="108.39999999999998" fill="none" stroke="#111" stroke-width="8"/>
<rect x="693.6" y="447.2" width="159.6" height="108.80000000000001" fill="none" stroke="#111" stroke-width="8"/>
<rect x="693.6" y="598.3" width="159.6" height="108.30000000000007" fill="none" stroke="#111" stroke-width="8"/></g>
<rect x="203" y="353.5" width="6.5" height="6.5" fill="#222"/>
<rect x="130.5" y="405" width="77.5" height="101" fill="#bdbdbd" opacity="0.8"/>
<rect x="129.7" y="404" width="77.5" height="100.5" fill="#fff"/>
<rect x="130.5" y="551" width="77.5" height="101" fill="#bdbdbd" opacity="0.8"/>
<rect x="129.7" y="550" width="77.5" height="100.5" fill="#fff"/>
<rect x="130.5" y="697.5" width="77.5" height="101" fill="#bdbdbd" opacity="0.8"/>
<rect x="129.7" y="696.5" width="77.5" height="100.5" fill="#fff"/>
<path d="M138 409.3H200" fill="none" stroke="#888" stroke-width="0.8"/>
<path d="M156 406.5h10M195 406.5h4" fill="none" stroke="#aaa" stroke-width="0.8"/>
<rect x="138.5" y="411" width="24" height="16" fill="#fff" stroke="#222" stroke-width="1.2"/>
<rect x="138.5" y="429.3" width="24" height="16.5" fill="#fff" stroke="#222" stroke-width="1.2"/>
<ellipse cx="147" cy="419" rx="6" ry="5.5" fill="#8a8a8a" transform="rotate(-30 147 419)"/><path d="M143 422l7-6M145 424l6-5" stroke="#ddd" stroke-width="0.7"/>
<ellipse cx="151" cy="437.5" rx="6.5" ry="5.5" fill="#8a8a8a" transform="rotate(-30 151 437.5)"/><path d="M147 441l7-6M149 443l6-5" stroke="#ddd" stroke-width="0.7"/>
<path d="M154 414h7M141 425h10M141 432h4M143 441l3 2" stroke="#888" stroke-width="0.7"/>
<path d="M166 410.7h33" fill="none" stroke="#999" stroke-width="0.8"/>
<path d="M168 412.6h4" fill="none" stroke="#999" stroke-width="0.8"/>
<path d="M168 416.5h10" fill="none" stroke="#333" stroke-width="0.8"/>
<path d="M178 416.5h15" fill="none" stroke="#999" stroke-width="0.8"/>
<path d="M166 429.6h33" fill="none" stroke="#888" stroke-width="0.8"/>
<path d="M168 431.6h24" fill="none" stroke="#999" stroke-width="0.8"/>
<path d="M164 434.5h35" fill="none" stroke="#888" stroke-width="0.8"/>
<path d="M168 437h7" fill="none" stroke="#555" stroke-width="0.8"/>
<path d="M168 439h22" fill="none" stroke="#999" stroke-width="0.8"/>
<path d="M136 555.3H199" fill="none" stroke="#777" stroke-width="0.6"/>
<path d="M138 552.5h3M153 552.5h16" fill="none" stroke="#999" stroke-width="0.8"/>
<rect x="136.8" y="569" width="25" height="17" fill="#fff" stroke="#222" stroke-width="1.2"/>
<path d="M141 584c1-5 3-9 7-12 4 1 7 4 10 9M145 582c1-4 3-7 5-9M149 575c2 2 3 5 3 8M152 572c2 2 5 4 6 6" fill="none" stroke="#888" stroke-width="0.9"/>
<path d="M162 557.5h20" fill="none" stroke="#666" stroke-width="0.9"/>
<path d="M164 561.5h14" fill="none" stroke="#666" stroke-width="0.9"/>
<path d="M163 564.5h28" fill="none" stroke="#666" stroke-width="0.9"/>
<path d="M165 568h28" fill="none" stroke="#666" stroke-width="0.9"/>
<path d="M167 570h29" fill="none" stroke="#666" stroke-width="0.9"/>
<path d="M188 559.5h12" fill="none" stroke="#999" stroke-width="0.6"/>
<path d="M138 700.3H200" fill="none" stroke="#777" stroke-width="0.6"/>
<path d="M157 698h12M196 698h4" fill="none" stroke="#999" stroke-width="0.8"/>
<rect x="138.5" y="703.5" width="24.3" height="16.2" fill="#fff" stroke="#222" stroke-width="1.2"/>
<ellipse cx="144" cy="713" rx="4" ry="5" fill="none" stroke="#777" stroke-width="1"/><rect x="157" y="705" width="4" height="5" fill="#555"/>
<path d="M167 703.5h32" fill="none" stroke="#555" stroke-width="0.9"/>
<path d="M167 705.5h30" fill="none" stroke="#555" stroke-width="0.9"/>
<path d="M167 707.5h33" fill="none" stroke="#555" stroke-width="0.9"/>
<path d="M167 709.5h28" fill="none" stroke="#555" stroke-width="0.9"/>
<rect x="168.7" y="712" width="31" height="14.8" fill="#2a2a2a"/>
<path d="M170 715.8h8M181 715.8h8M191 715.8h7.5" fill="none" stroke="#bbb" stroke-width="0.9"/>
<path d="M170 719.3h8M181 719.3h8M191 719.3h7.5" fill="none" stroke="#bbb" stroke-width="0.9"/>
<path d="M170 722.8h8M181 722.8h8M191 722.8h7.5" fill="none" stroke="#bbb" stroke-width="0.9"/>
<path d="M179.5 712v15M189.5 712v15" fill="none" stroke="#fff" stroke-width="0.6"/>
<rect x="138.7" y="729" width="61" height="34.6" fill="#fff" stroke="#222" stroke-width="1.2"/>
<rect x="149" y="741" width="8" height="8" fill="none" stroke="#aaa" stroke-width="0.8"/><circle cx="181" cy="745" r="9" fill="none" stroke="#bbb" stroke-width="1.5" stroke-dasharray="1 1"/>
<path d="M323 476.5v10.5l-6-5.25z" fill="#6b6b6b"/>
</svg>
<!--/PANEL-->
<!--CHROME-->
<svg style="left:0;top:0" width="1240" height="170" viewBox="0 0 1240 170" font-family="Liberation Sans, sans-serif">
<text x="22.5" y="15.3" textLength="304.8" lengthAdjust="spacingAndGlyphs" font-size="12" fill="#000">E13C(US)SM(93213-00651).pdf - Adobe Acrobat Pro (64-bit)</text>
<text x="7.3" y="36.1" textLength="17.3" lengthAdjust="spacingAndGlyphs" font-size="12" fill="#2a2a2a">File</text>
<text x="38.3" y="36.1" textLength="19.2" lengthAdjust="spacingAndGlyphs" font-size="12" fill="#2a2a2a">Edit</text>
<text x="71" y="36.1" textLength="24.8" lengthAdjust="spacingAndGlyphs" font-size="12" fill="#2a2a2a">View</text>
<text x="109.3" y="36.1" textLength="32.8" lengthAdjust="spacingAndGlyphs" font-size="12" fill="#2a2a2a">E-Sign</text>
<text x="156.3" y="36.1" textLength="42.9" lengthAdjust="spacingAndGlyphs" font-size="12" fill="#2a2a2a">Window</text>
<text x="213.1" y="36.1" textLength="23.2" lengthAdjust="spacingAndGlyphs" font-size="12" fill="#2a2a2a">Help</text>
<text x="31" y="65.5" textLength="54.5" lengthAdjust="spacingAndGlyphs" font-size="13" fill="#dcdcdc">New Snip</text>
<text x="124" y="65.5" textLength="35" lengthAdjust="spacingAndGlyphs" font-size="13" fill="#dcdcdc">Ctrl+N</text>
<text x="16" y="65" textLength="40.5" lengthAdjust="spacingAndGlyphs" font-size="14.8" fill="#3c3c3c">Home</text>
<text x="86" y="65" textLength="33.5" lengthAdjust="spacingAndGlyphs" font-size="14.8" fill="#2a2a2a">Tools</text>
<text x="176" y="65.7" textLength="118.3" lengthAdjust="spacingAndGlyphs" font-size="14.4" fill="#3a3a3a">E13C(US)SM(9321...</text>
<text x="59.2" y="148.2" textLength="109.4" lengthAdjust="spacingAndGlyphs" font-size="14.8" fill="#333">Page Thumbnails</text>
<text x="458.7" y="104.2" textLength="17.3" lengthAdjust="spacingAndGlyphs" font-size="12" fill="#555">333</text>
<text x="490" y="104.2" textLength="4" lengthAdjust="spacingAndGlyphs" font-size="12" fill="#222">/</text>
<text x="500.8" y="104.2" textLength="16.7" lengthAdjust="spacingAndGlyphs" font-size="12" fill="#222">589</text>
<text x="737.5" y="104.4" textLength="22.2" lengthAdjust="spacingAndGlyphs" font-size="12" fill="#444">58%</text>
</svg>
<!--/CHROME-->
</body></html>
